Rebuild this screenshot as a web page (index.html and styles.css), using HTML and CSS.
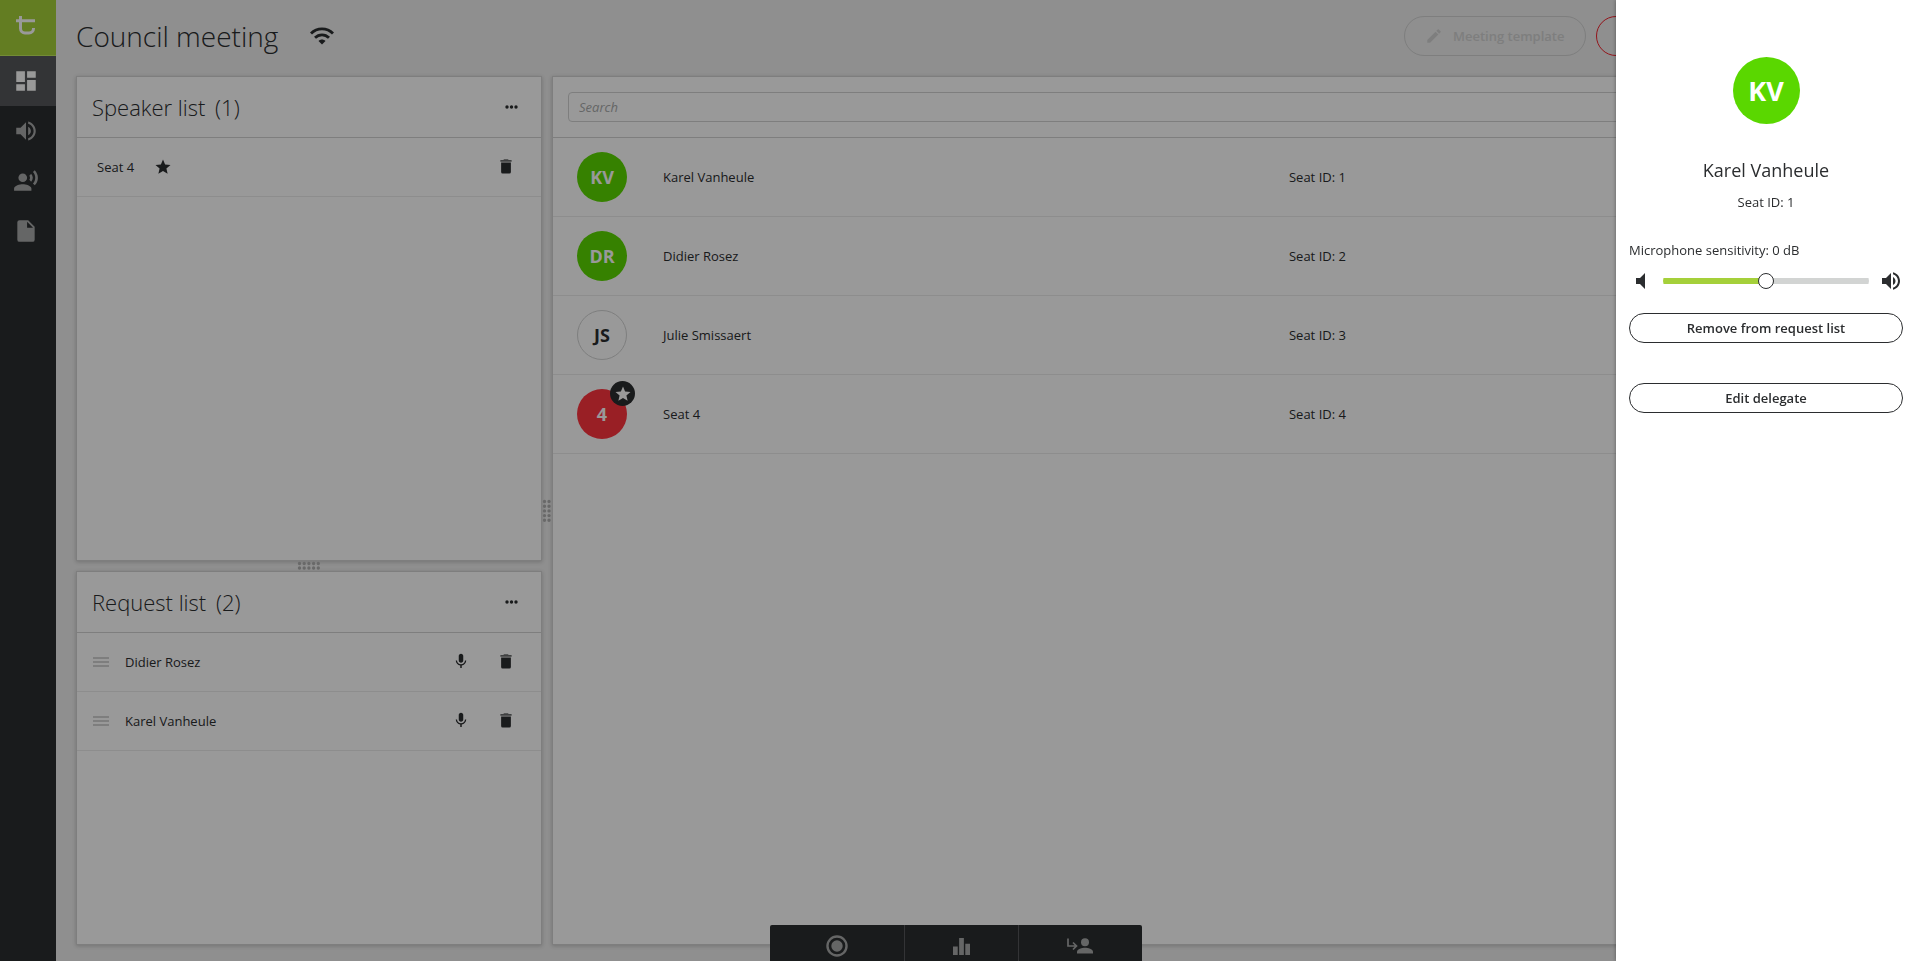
FILE: index.html
```html
<!DOCTYPE html>
<html lang="en">
<head>
<meta charset="utf-8">
<title>Council meeting</title>
<link rel="stylesheet" href="styles.css">
</head>
<body>
<svg width="0" height="0" class="sprite" aria-hidden="true">
  <symbol id="dashboard" viewBox="0 0 24 24"><path d="M3 13h8V3H3v10zm0 8h8v-6H3v6zm10 0h8V11h-8v10zm0-18v6h8V3h-8z"/></symbol>
  <symbol id="volume" viewBox="0 0 24 24"><path d="M3 9v6h4l5 5V4L7 9H3zm13.5 3c0-1.77-1.02-3.29-2.5-4.03v8.05c1.48-.73 2.5-2.25 2.5-4.02zM14 3.23v2.06c2.89.86 5 3.54 5 6.71s-2.11 5.85-5 6.71v2.06c4.01-.91 7-4.49 7-8.77s-2.99-7.86-7-8.77z"/></symbol>
  <symbol id="mute" viewBox="0 0 24 24"><path d="M7 9v6h4l5 5V4l-5 5H7z"/></symbol>
  <symbol id="voice" viewBox="0 0 24 24"><circle cx="9" cy="9" r="4"/><path d="M9 15c-2.67 0-8 1.34-8 4v2h16v-2c0-2.66-5.33-4-8-4zM16.76 5.36l-1.68 1.69c.84 1.18.84 2.71 0 3.89l1.68 1.69c2.02-2.02 2.02-5.07 0-7.27zM20.07 2l-1.63 1.63c2.77 3.02 2.77 7.56 0 10.74L20.07 16c3.9-3.89 3.91-9.95 0-14z"/></symbol>
  <symbol id="file" viewBox="0 0 24 24"><path d="M6 2a2 2 0 0 0-2 2v16a2 2 0 0 0 2 2h12a2 2 0 0 0 2-2V8l-6-6H6zm7 7V3.5L18.500 9H13z"/></symbol>
  <symbol id="wifi" viewBox="0 0 24 18"><g fill="none" stroke="currentColor" stroke-width="2.800"><path d="M1 6.500C7 .3 17 .3 23 6.500M5 10.800c4-4 10-4 14 0"/></g><path d="M8.500 14c2-2 5-2 7 0L12 17.500z"/></symbol>
  <symbol id="star" viewBox="0 0 24 24"><path d="M12 17.270L18.180 21l-1.640-7.030L22 9.240l-7.190-.61L12 2 9.190 8.630 2 9.240l5.460 4.730L5.820 21z"/></symbol>
  <symbol id="trash" viewBox="0 0 24 24"><path d="M5.500 6v12.500a2 2 0 0 0 2 2h9a2 2 0 0 0 2-2V6z"/><path opacity=".7" d="M19.500 2.800H15.500L14.700 1.500H9.300L8.500 2.800h-4V5h15z"/></symbol>
  <symbol id="mic" viewBox="0 0 24 24"><path d="M12 13c1.660 0 3-1.340 3-3V4c0-1.660-1.340-3-3-3S9 2.340 9 4v6c0 1.660 1.340 3 3 3zm5.300-3c0 3-2.540 5.100-5.300 5.100S6.700 13 6.700 10H5c0 3.410 2.720 6.230 6 6.720V20h2v-3.280c3.280-.48 6-3.300 6-6.720h-1.700z"/></symbol>
  <symbol id="pencil" viewBox="0 0 24 24"><path d="M3 17.250V21h3.750L17.810 9.940l-3.750-3.750L3 17.250zM20.710 7.040a1 1 0 0 0 0-1.410l-2.340-2.340a1 1 0 0 0-1.410 0l-1.830 1.830 3.750 3.750 1.830-1.830z"/></symbol>
  <symbol id="more" viewBox="0 0 13 4"><circle cx="2" cy="2" r="1.700"/><circle cx="6.500" cy="2" r="1.700"/><circle cx="11" cy="2" r="1.700"/></symbol>
  <symbol id="record" viewBox="0 0 24 24"><circle cx="12" cy="12" r="6.200"/><circle cx="12" cy="12" r="10.400" fill="none" stroke="currentColor" stroke-width="2.600"/></symbol>
  <symbol id="bars" viewBox="0 0 18 18"><path d="M0 9h5v9H0zM6.500 0h5v18h-5zM13 6h5v12h-5z"/></symbol>
  <symbol id="goto" viewBox="0 0 26 16"><circle cx="18" cy="4.200" r="4"/><path d="M10 15.500v-1.800c0-2.600 5.200-3.900 8-3.900s8 1.300 8 3.900v1.800z"/><path d="M1 .5v7.500h8M6 4.500L9.500 8 6 11.500" fill="none" stroke="currentColor" stroke-width="1.700"/></symbol>
  <symbol id="logo" viewBox="0 0 20 19"><path d="M0 4.700h19M4.500 0v12.500a4.500 4.500 0 0 0 4.500 4.500h4a4.500 4.500 0 0 0 4.500-4.500v-.5" fill="none" stroke="currentColor" stroke-width="3"/></symbol>
</svg>

<div class="app">
  <nav class="sidebar" aria-label="Main">
    <a class="brand" href="#" aria-label="Home"><svg class="logo"><use href="#logo"/></svg></a>
    <a class="nav-item active" href="#" aria-label="Dashboard"><svg class="icon-nav"><use href="#dashboard"/></svg></a>
    <a class="nav-item" href="#" aria-label="Audio"><svg class="icon-nav"><use href="#volume"/></svg></a>
    <a class="nav-item" href="#" aria-label="Speakers"><svg class="icon-nav"><use href="#voice"/></svg></a>
    <a class="nav-item" href="#" aria-label="Files"><svg class="icon-nav"><use href="#file"/></svg></a>
  </nav>

  <main class="main">
    <header class="topbar">
      <h1 class="title">Council meeting</h1>
      <svg class="icon-wifi"><use href="#wifi"/></svg>
      <div class="actions">
        <button class="pill pill-disabled" disabled><svg class="icon-md"><use href="#pencil"/></svg>Meeting template</button>
        <button class="pill pill-stop" aria-label="Stop meeting"></button>
      </div>
    </header>

    <div class="workspace">
      <div class="lists">
        <section class="panel panel-speakers">
          <header class="panel-head"><h2 class="panel-title">Speaker list <span>(1)</span></h2><button class="icon-btn" aria-label="Speaker list options"><svg class="icon-more"><use href="#more"/></svg></button></header>
          <div class="row row-speaker"><span>Seat 4</span><svg class="icon-md"><use href="#star"/></svg><button class="icon-btn push" aria-label="Remove Seat 4"><svg class="icon-md"><use href="#trash"/></svg></button></div>
        </section>
        <div class="grip"><svg width="24" height="10" viewBox="0 0 24 10"><path d="M2.500 2.500h21M2.500 7h21" stroke="currentColor" stroke-width="3.400" stroke-linecap="round" stroke-dasharray="0 4.700"/></svg></div>
        <section class="panel panel-requests">
          <header class="panel-head"><h2 class="panel-title">Request list <span>(2)</span></h2><button class="icon-btn" aria-label="Request list options"><svg class="icon-more"><use href="#more"/></svg></button></header>
          <div class="row"><i class="handle"></i><span>Didier Rosez</span><button class="icon-btn push" aria-label="Give Didier Rosez the floor"><svg class="icon-md"><use href="#mic"/></svg></button><button class="icon-btn" aria-label="Remove Didier Rosez"><svg class="icon-md"><use href="#trash"/></svg></button></div>
          <div class="row"><i class="handle"></i><span>Karel Vanheule</span><button class="icon-btn push" aria-label="Give Karel Vanheule the floor"><svg class="icon-md"><use href="#mic"/></svg></button><button class="icon-btn" aria-label="Remove Karel Vanheule"><svg class="icon-md"><use href="#trash"/></svg></button></div>
        </section>
      </div>
      <div class="grip"><svg width="10" height="24" viewBox="0 0 10 24"><path d="M2.500 2.500v21M7 2.500v21" stroke="currentColor" stroke-width="3.400" stroke-linecap="round" stroke-dasharray="0 4.700"/></svg></div>
      <section class="panel panel-delegates">
        <header class="panel-head"><input class="search" type="search" placeholder="Search" aria-label="Search"></header>
        <div class="delegate"><span class="avatar green">KV</span><span>Karel Vanheule</span><span>Seat ID: 1</span></div>
        <div class="delegate"><span class="avatar green">DR</span><span>Didier Rosez</span><span>Seat ID: 2</span></div>
        <div class="delegate"><span class="avatar outline">JS</span><span>Julie Smissaert</span><span>Seat ID: 3</span></div>
        <div class="delegate"><span class="avatar red">4<i class="badge"><svg class="icon-md"><use href="#star"/></svg></i></span><span>Seat 4</span><span>Seat ID: 4</span></div>
      </section>
    </div>
  </main>

  <div class="dock">
    <button class="dock-btn dock-record" aria-label="Record"><svg class="icon-record"><use href="#record"/></svg></button>
    <button class="dock-btn dock-vote" aria-label="Voting"><svg class="icon-bars"><use href="#bars"/></svg></button>
    <button class="dock-btn dock-next" aria-label="Next speaker"><svg class="icon-goto"><use href="#goto"/></svg></button>
  </div>
</div>

<div class="scrim"></div>

<aside class="drawer">
  <span class="avatar avatar-lg green">KV</span>
  <h2 class="drawer-name">Karel Vanheule</h2>
  <p class="drawer-seat">Seat ID: 1</p>
  <label class="drawer-label" for="sensitivity">Microphone sensitivity: 0 dB</label>
  <div class="slider-row">
    <svg class="icon-vol"><use href="#mute"/></svg>
    <input class="slider" id="sensitivity" type="range" min="-10" max="10" value="0">
    <svg class="icon-vol"><use href="#volume"/></svg>
  </div>
  <button class="drawer-btn">Remove from request list</button>
  <button class="drawer-btn drawer-edit">Edit delegate</button>
</aside>
</body>
</html>
```
FILE: styles.css
```css
* { box-sizing: border-box; }

body {
  margin: 0;
  background: #eee;
  color: #2b2d2f;
  font: 13px/18px "Open Sans", "Noto Sans", sans-serif;
  overflow: hidden;
}

h1, h2, p { margin: 0; font-weight: 400; }
button { font: inherit; color: inherit; background: none; border: 0; padding: 0; cursor: pointer; }
svg { display: block; fill: currentColor; flex: none; }
.sprite { position: absolute; }

.app { display: flex; height: 100vh; }

/* Sidebar */
.sidebar { width: 56px; flex: none; background: #2b2d2f; }
.brand { display: flex; align-items: center; justify-content: center; height: 56px; padding-bottom: 4px; padding-right: 4px; background: #a5d03a; border-bottom: 1px solid #c0e85a; color: #fff; }
.nav-item { display: flex; align-items: center; justify-content: center; height: 50px; padding-right: 4px; color: #a9abab; }
.nav-item.active { background: #55585a; color: #fff; }
.logo { width: 20px; height: 19px; }
.icon-nav { width: 26px; height: 26px; }

/* Top bar */
.main { flex: 1; min-width: 0; display: flex; flex-direction: column; padding: 0 20px 16px; }
.topbar { display: flex; align-items: center; height: 76px; padding-bottom: 4px; }
.title { font-size: 28px; line-height: 40px; font-weight: 300; }
.icon-wifi { width: 24px; height: 18px; margin-left: 32px; }
.actions { display: flex; gap: 10px; margin-left: auto; }
.pill { display: flex; align-items: center; height: 40px; border: 1px solid #d2d3d3; border-radius: 20px; font-weight: 600; }
.pill-disabled { gap: 10px; width: 182px; padding-left: 20px; color: #d2d3d3; }
.pill-stop { width: 293px; border-color: #f5222d; }

/* Panels */
.workspace { flex: 1; min-height: 0; display: flex; }
.lists { width: 466px; flex: none; display: flex; flex-direction: column; }
.panel { background: #fff; border: 1px solid #d2d3d3; box-shadow: 0 1px 4px rgba(0, 0, 0, .2); }
.panel-speakers { flex: 486; min-height: 0; }
.panel-requests { flex: 374; min-height: 0; }
.panel-delegates { flex: 1; min-width: 0; }
.panel-head { display: flex; align-items: center; justify-content: space-between; height: 61px; padding: 0 15px; border-bottom: 1px solid #d2d3d3; }
.panel-title { font-size: 22px; line-height: 30px; font-weight: 300; }
.panel-title span { margin-left: 4px; }
.grip { flex: 0 0 10px; display: flex; align-items: center; justify-content: center; color: #b0b0b0; }

.row { display: flex; align-items: center; height: 59px; padding: 0 26px 0 16px; border-bottom: 1px solid #ebebeb; }
.row-speaker { gap: 20px; padding-left: 20px; }
.icon-btn { flex: none; }
.push { margin-left: auto; }
.push + .icon-btn { margin-left: 27px; }
.handle { width: 16px; height: 10px; margin-right: 16px; border-top: 2px solid #d2d3d3; border-bottom: 2px solid #d2d3d3; background: linear-gradient(#d2d3d3, #d2d3d3) center / 100% 2px no-repeat; }
.icon-md { width: 18px; height: 18px; }
.icon-more { width: 13px; height: 4px; margin-right: 8px; }

.search { flex: 1; min-width: 0; height: 30px; padding: 0 10px; border: 1px solid #d2d3d3; border-radius: 4px; background: #fff; font: inherit; }
.search::placeholder { font-style: italic; color: #a9abab; opacity: 1; }

/* Delegates */
.delegate { display: grid; grid-template-columns: 86px 511fr 489fr; align-items: center; height: 79px; padding-left: 24px; border-bottom: 1px solid #ebebeb; }
.avatar { position: relative; display: flex; align-items: center; justify-content: center; width: 50px; height: 50px; border-radius: 50%; font-size: 18px; line-height: 24px; font-weight: 700; }
.green { background: #5ad700; color: #fff; }
.outline { border: 1px solid #d2d3d3; }
.red { background: #ff343f; color: #fff; }
.badge { position: absolute; top: -8px; right: -8px; display: flex; align-items: center; justify-content: center; width: 25px; height: 25px; border-radius: 50%; background: #2b2d2f; color: #fff; }

/* Dock */
.dock { position: fixed; left: 50%; bottom: 0; transform: translateX(-50%); display: flex; height: 36px; margin-left: 1px; background: #2b2d2f; border-radius: 2px 2px 0 0; color: #a9abab; }
.dock-btn { display: flex; align-items: center; justify-content: center; padding-top: 6px; }
.dock-btn + .dock-btn { border-left: 1px solid #55585a; }
.dock-record { width: 134px; }
.dock-vote { width: 114px; }
.dock-next { width: 124px; }
.icon-record { width: 22px; height: 22px; }
.icon-bars { width: 17px; height: 17px; }
.icon-goto { width: 26px; height: 16px; }

.scrim { position: fixed; inset: 0; background: rgba(0, 0, 0, .4); }

/* Drawer */
.drawer { position: fixed; top: 0; right: 0; bottom: 0; width: 293px; display: flex; flex-direction: column; padding: 57px 6px 0 13px; background: #fff; box-shadow: 0 0 4px rgba(0, 0, 0, .4); }
.avatar-lg { align-self: center; width: 67px; height: 67px; font-size: 27px; line-height: 36px; }
.drawer-name { margin-top: 34px; font-size: 18px; line-height: 24px; text-align: center; }
.drawer-seat { margin-top: 11px; text-align: center; }
.drawer-label { margin-top: 30px; }
.slider-row { display: flex; align-items: center; justify-content: space-between; gap: 10px; margin-top: 10px; }
.icon-vol { width: 24px; height: 24px; }
.slider { flex: 1; min-width: 0; height: 16px; margin: 0; appearance: none; border-radius: 8px; background: linear-gradient(to right, #a5d03a 50%, #d2d4d3 50%) center / 100% 6px no-repeat; }
.slider::-webkit-slider-thumb { appearance: none; width: 16px; height: 16px; border: 1px solid #2b2d2f; border-radius: 50%; background: #fff; }
.drawer-btn { height: 30px; margin-top: 20px; border: 1px solid #2b2d2f; border-radius: 15px; font-weight: 600; }
.drawer-edit { margin-top: 40px; }
```
